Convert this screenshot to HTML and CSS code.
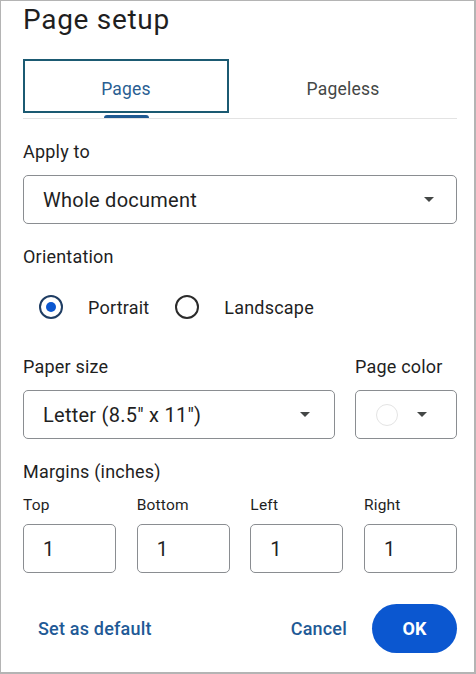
FILE: index.html
```html
<!DOCTYPE html>
<html>
<head>
<meta charset="utf-8">
<link rel="stylesheet" href="styles.css">
</head>
<body>
<div class="dialog">
  <h1 class="title">Page setup</h1>

  <div class="tabs">
    <div class="tab tab-active">
      <div class="tab-box">Pages</div>
      <div class="tab-indicator"></div>
    </div>
    <div class="tab tab-plain">
      <div class="tab-box">Pageless</div>
    </div>
  </div>

  <div class="label label-apply">Apply to</div>
  <div class="select select-apply">
    <span class="select-text">Whole document</span>
    <span class="caret"></span>
  </div>

  <div class="label label-orient">Orientation</div>
  <div class="radios">
    <div class="radio-opt">
      <span class="radio-target"><span class="radio radio-on"><span class="radio-dot"></span></span></span>
      <span class="radio-label">Portrait</span>
    </div>
    <div class="radio-opt">
      <span class="radio-target"><span class="radio"></span></span>
      <span class="radio-label">Landscape</span>
    </div>
  </div>

  <div class="paper-row">
    <div class="paper-col">
      <div class="label">Paper size</div>
      <div class="select select-paper">
        <span class="select-text">Letter (8.5" x 11")</span>
        <span class="caret"></span>
      </div>
    </div>
    <div class="color-col">
      <div class="label">Page color</div>
      <div class="select select-color">
        <span class="swatch"></span>
        <span class="caret"></span>
      </div>
    </div>
  </div>

  <div class="label label-margins">Margins (inches)</div>
  <div class="margins">
    <div class="margin-field">
      <div class="small-label">Top</div>
      <div class="num-input">1</div>
    </div>
    <div class="margin-field">
      <div class="small-label">Bottom</div>
      <div class="num-input">1</div>
    </div>
    <div class="margin-field">
      <div class="small-label">Left</div>
      <div class="num-input">1</div>
    </div>
    <div class="margin-field">
      <div class="small-label">Right</div>
      <div class="num-input">1</div>
    </div>
  </div>

  <div class="footer">
    <button class="text-btn btn-default">Set as default</button>
    <div class="footer-right">
      <button class="text-btn btn-cancel">Cancel</button>
      <button class="ok-btn">OK</button>
    </div>
  </div>
</div>
</body>
</html>
```

FILE: styles.css
```css
* { box-sizing: border-box; }

html, body {
  margin: 0;
  padding: 0;
  background: #ffffff;
}

body {
  font-family: Roboto, "Liberation Sans", sans-serif;
  color: #1f1f1f;
}

.dialog {
  width: 476px;
  height: 674px;
  border: 1px solid #b4b4b4;
  border-right-width: 2px;
  border-bottom-width: 2px;
  padding: 3px 17px 0 22px;
  display: flex;
  flex-direction: column;
  background: #fff;
}

.title {
  margin: 0;
  font-size: 28px;
  font-weight: 400;
  line-height: 32px;
  letter-spacing: 0.7px;
  color: #1f1f1f;
}

/* Tabs */
.tabs {
  margin-top: 23px;
  height: 60px;
  display: flex;
  border-bottom: 1px solid #e3e3e3;
}

.tab {
  display: flex;
  flex-direction: column;
  align-items: center;
}

.tab-active { width: 206px; }
.tab-plain { flex: 1; }

.tab-box {
  width: 100%;
  height: 54px;
  display: flex;
  align-items: center;
  justify-content: center;
  padding-top: 5px;
  font-size: 17.5px;
  font-weight: 400;
  letter-spacing: 0.2px;
}

.tab-active .tab-box {
  border: 2px solid #1b5a72;
  color: #2a5e92;
}

.tab-plain .tab-box {
  color: #444746;
}

.tab-indicator {
  margin-top: 2px;
  width: 45px;
  height: 3px;
  border-radius: 3px 3px 0 0;
  background: #1f5a92;
}

/* Labels */
.label {
  font-size: 18px;
  line-height: 24px;
  letter-spacing: 0.2px;
  color: #1f1f1f;
}

.label-apply { margin-top: 21px; }
.label-orient { margin-top: 21px; }
.label-margins { margin-top: 21px; }

/* Selects */
.select {
  margin-top: 11px;
  height: 49px;
  border: 1px solid #8a8d91;
  border-radius: 5px;
  display: flex;
  align-items: center;
  padding-left: 19px;
  padding-right: 22px;
}

.select-text {
  flex: 1;
  font-size: 20px;
  letter-spacing: 0.25px;
  color: #1f1f1f;
}

.caret {
  width: 0;
  height: 0;
  border-left: 5px solid transparent;
  border-right: 5px solid transparent;
  border-top: 5px solid #444746;
}

.select-paper { padding-right: 24px; }

.select-color {
  padding-left: 20px;
  padding-right: 29px;
  justify-content: space-between;
}

.swatch {
  width: 22px;
  height: 22px;
  border-radius: 50%;
  border: 1px solid #e4e4e4;
  background: #fff;
}

/* Radios */
.radios {
  margin-top: 18px;
  height: 40px;
  display: flex;
  align-items: center;
  padding-left: 8px;
  gap: 18px;
}

.radio-opt {
  display: flex;
  align-items: center;
}

.radio-target {
  width: 40px;
  height: 40px;
  display: flex;
  align-items: center;
  justify-content: center;
}

.radio {
  width: 24px;
  height: 24px;
  border-radius: 50%;
  border: 2px solid #2b2b2b;
  display: flex;
  align-items: center;
  justify-content: center;
}

.radio-on {
  border-color: #1f3d63;
}

.radio-dot {
  width: 10px;
  height: 10px;
  border-radius: 50%;
  background: #0b57d0;
}

.radio-label {
  margin-left: 17px;
  font-size: 18px;
  letter-spacing: 0.2px;
  color: #1f1f1f;
}

/* Paper row */
.paper-row {
  margin-top: 28px;
  display: flex;
  gap: 20px;
}

.paper-col { flex: 1; }
.color-col { width: 102px; }

/* Margins */
.margins {
  margin-top: 11px;
  display: grid;
  grid-template-columns: repeat(4, 1fr);
  column-gap: 20.67px;
}

.small-label {
  font-size: 15.5px;
  line-height: 20px;
  letter-spacing: 0.2px;
  color: #1f1f1f;
}

.num-input {
  margin-top: 9px;
  height: 49px;
  border: 1px solid #8a8d91;
  border-radius: 5px;
  display: flex;
  align-items: center;
  padding-left: 19px;
  font-size: 20px;
  color: #1f1f1f;
}

/* Footer */
.footer {
  margin-top: 31px;
  display: flex;
  align-items: center;
  justify-content: space-between;
}

.footer-right {
  display: flex;
  align-items: center;
  gap: 13px;
}

.text-btn {
  font-family: Roboto, "Liberation Sans", sans-serif;
  background: none;
  border: none;
  height: 49px;
  font-size: 18px;
  font-weight: 500;
  letter-spacing: 0.2px;
  color: #1f5a96;
  cursor: pointer;
}

.btn-default { padding: 0 15px; }
.btn-cancel { padding: 0 12px; }

.ok-btn {
  font-family: Roboto, "Liberation Sans", sans-serif;
  width: 85px;
  height: 49px;
  border: none;
  border-radius: 25px;
  background: #0b57d0;
  color: #fff;
  font-size: 18px;
  font-weight: 700;
  cursor: pointer;
}
```
